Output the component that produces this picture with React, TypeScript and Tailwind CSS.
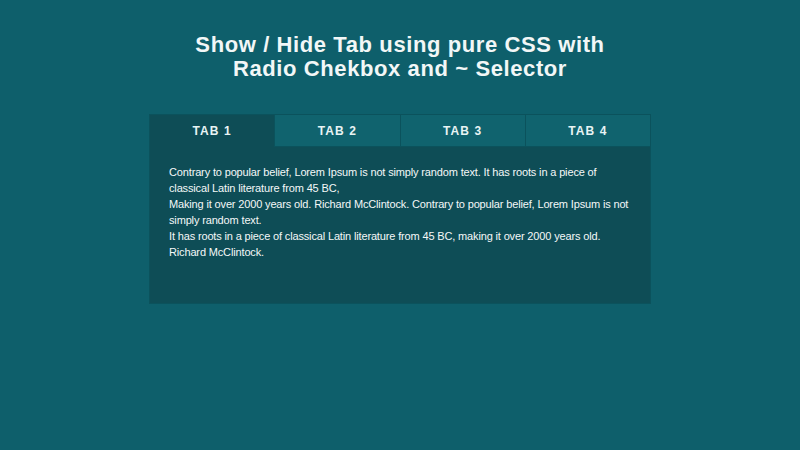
import { useState } from 'react';

const tabs = ['TAB 1', 'TAB 2', 'TAB 3', 'TAB 4'];

const App = () => {
  const [active, setActive] = useState(0);

  return (
    <div className="min-h-[450px] w-full bg-[#0e5f6b] font-['Liberation_Sans',Arial,sans-serif] text-white">
      <h1 className="pt-[33px] text-center text-[22px] font-bold leading-[24px] tracking-[0.6px] text-[#f2f7f7]">
        Show / Hide Tab using pure CSS with
        <br />
        Radio Chekbox and ~ Selector
      </h1>

      <div className="mx-auto mt-[33px] w-[502px] border border-[#0b525c] bg-[#0e4d56]">
        {/* Tab headers */}
        <div className="flex">
          {tabs.map((tab, i) => (
            <button
              key={tab}
              onClick={() => setActive(i)}
              className={`h-[32px] flex-1 border-[#0b525c] text-[12px] font-bold tracking-[1.1px] text-[#e8f4f4] ${
                i > 0 ? 'border-l' : ''
              } ${active === i ? 'bg-[#0e4d56]' : 'border-b bg-[#10636e]'}`}
            >
              {tab}
            </button>
          ))}
        </div>

        {/* Tab content */}
        <div className="h-[156px] px-[19px] pt-[17px] text-[11px] leading-[16px] tracking-[-0.15px] text-[#f4f8f8]">
          <p>
            Contrary to popular belief, Lorem Ipsum is not simply random text. It has roots in a piece of
            classical Latin literature from 45 BC,
            <br />
            Making it over 2000 years old. Richard McClintock. Contrary to popular belief, Lorem Ipsum is not
            simply random text.
            <br />
            It has roots in a piece of classical Latin literature from 45 BC, making it over 2000 years old.
            Richard McClintock.
          </p>
        </div>
      </div>
    </div>
  );
};

export default App;
